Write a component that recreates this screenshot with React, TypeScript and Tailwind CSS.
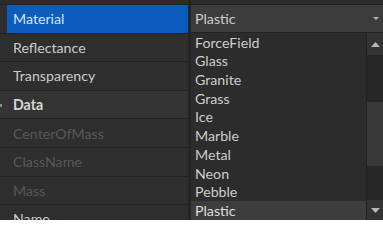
const rows = [
  { label: "Reflectance", kind: "prop" },
  { label: "Transparency", kind: "prop" },
  { label: "Data", kind: "cat" },
  { label: "CenterOfMass", kind: "off" },
  { label: "ClassName", kind: "off" },
  { label: "Mass", kind: "off" },
  { label: "Name", kind: "prop" },
];

const materials = ["ForceField", "Glass", "Granite", "Grass", "Ice", "Marble", "Metal", "Neon", "Pebble", "Plastic"];

function Tri({ up, small }: { up?: boolean; small?: boolean }) {
  const w = small ? 6 : 9;
  const h = small ? 3 : 5;
  return (
    <svg width={w} height={h} viewBox={`0 0 ${w} ${h}`}>
      <path d={up ? `M0 ${h} L${w / 2} 0 L${w} ${h} Z` : `M0 0 L${w} 0 L${w / 2} ${h} Z`} fill="#b8b8b8" />
    </svg>
  );
}

export default function App() {
  return (
    <div
      className="relative flex w-[383px] h-[220px] overflow-hidden bg-[#2e2e2e] text-[14.2px] text-[#cccccc]"
      style={{ fontFamily: "Lato, 'Open Sans', sans-serif" }}
    >
      {/* property names */}
      <div className="flex flex-col w-[188px] shrink-0">
        <div className="h-[5px] shrink-0 bg-[#2b2b2b] border-b border-[#222222]" />
        <div className="flex h-[28.6px] shrink-0 border-b border-[#222222]">
          <div className="w-[7px]" />
          <div className="flex-1 flex items-center pl-[6px] bg-[#0b5cbc] text-[#d8e4f2]">Material</div>
        </div>
        {rows.map((r) => (
          <div
            key={r.label}
            className={
              r.kind === "cat"
                ? "relative flex items-center h-[28.6px] shrink-0 pl-[13px] border-b border-[#222222] bg-[#343434] font-bold text-[#d6d6d6]"
                : r.kind === "off"
                ? "flex items-center h-[28.6px] shrink-0 pl-[13px] border-b border-[#222222] text-[#585858]"
                : "flex items-center h-[28.6px] shrink-0 pl-[13px] border-b border-[#222222]"
            }
          >
            {r.kind === "cat" && <div className="absolute left-0 top-[13px] w-[2px] h-[3px] bg-[#8a8a8a]" />}
            {r.label}
          </div>
        ))}
      </div>

      <div className="w-[3px] shrink-0 bg-[#242424]" />

      {/* value column with open dropdown */}
      <div className="flex flex-col flex-1">
        <div className="h-[5px] shrink-0 bg-[#2b2b2b] border-b border-[#222222]" />
        <div className="flex items-center justify-between h-[28px] shrink-0 pl-[4px] pr-[4px] bg-[#3c3c3c] border-b border-[#222222]">
          <span>Plastic</span>
          <Tri small />
        </div>
        <div className="flex flex-1 min-h-0">
          <div className="flex flex-col flex-1 bg-[#2c2c2c] border-r border-[#222222]">
            {materials.map((m) => (
              <div
                key={m}
                className={
                  m === "Plastic"
                    ? "flex items-center h-[18.7px] shrink-0 pl-[4px] bg-[#3d3d3d] text-[#dddddd]"
                    : "flex items-center h-[18.7px] shrink-0 pl-[4px]"
                }
              >
                {m}
              </div>
            ))}
          </div>
          <div className="flex flex-col w-[16px] shrink-0 bg-[#272727]">
            <div className="flex items-center justify-center h-[22px] bg-[#333333]">
              <Tri up />
            </div>
            <div className="h-[47px]" />
            <div className="h-[64px] bg-[#383838]" />
            <div className="flex-1" />
            <div className="flex items-center justify-center h-[20px] bg-[#333333]">
              <Tri />
            </div>
          </div>
        </div>
      </div>
    </div>
  );
}
